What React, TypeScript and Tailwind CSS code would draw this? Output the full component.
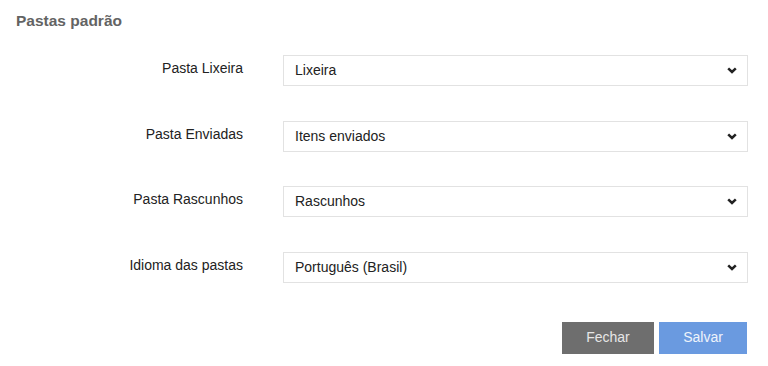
const folders = [
  { label: "Pasta Lixeira", value: "Lixeira" },
  { label: "Pasta Enviadas", value: "Itens enviados" },
  { label: "Pasta Rascunhos", value: "Rascunhos" },
  { label: "Idioma das pastas", value: "Português (Brasil)" },
];

function Chevron() {
  return (
    <svg width="10" height="7" viewBox="0 0 10 7" className="shrink-0">
      <path d="M1.2 1.3 L5 5 L8.8 1.3" fill="none" stroke="#222" strokeWidth="2.5" />
    </svg>
  );
}

function SelectRow({ label, value }: { label: string; value: string }) {
  return (
    <div className="flex items-start">
      <div className="w-[227px] shrink-0 pt-[3px] text-right text-[14px] leading-5 text-[#222]">
        {label}
      </div>
      <div className="ml-10 flex h-[31px] flex-1 items-center justify-between border border-[#e2e2e2] bg-white pl-[11px] pr-[10px] text-[14px] text-[#222]">
        <span>{value}</span>
        <Chevron />
      </div>
    </div>
  );
}

export default function App() {
  return (
    <div
      className="h-[366px] w-[768px] bg-white pl-4 pr-5"
      style={{ fontFamily: '"Liberation Sans", Arial, sans-serif' }}
    >
      <h2 className="pt-[11px] text-[15.5px] font-bold leading-5 text-[#636363]">Pastas padrão</h2>
      <div className="mt-[24px] flex flex-col gap-[34.6px]">
        {folders.map((f) => (
          <SelectRow key={f.label} label={f.label} value={f.value} />
        ))}
      </div>
      <div className="mt-[39px] flex justify-end gap-[5px] pr-px">
        <button className="h-8 w-[92px] bg-[#6e6e6e] text-[14px] text-[#e6e6e6]">Fechar</button>
        <button className="h-8 w-[88px] bg-[#6a9ae0] text-[14px] text-[#eef3fb]">Salvar</button>
      </div>
    </div>
  );
}
